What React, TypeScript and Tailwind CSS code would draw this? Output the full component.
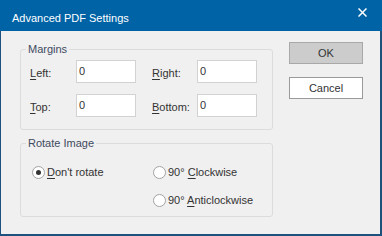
import React from "react";

const U = ({ children }: { children: React.ReactNode }) => (
  <span className="underline underline-offset-[2px] decoration-1">{children}</span>
);

function Radio({ checked, children }: { checked?: boolean; children: React.ReactNode }) {
  return (
    <div className="flex items-center h-[16px]">
      <div className="w-[13px] h-[13px] rounded-full border border-[#a3a3a3] bg-white flex items-center justify-center">
        {checked && <div className="w-[5px] h-[5px] rounded-full bg-[#333333]" />}
      </div>
      <span className="ml-[2px] text-[#333333]">{children}</span>
    </div>
  );
}

function Field() {
  return (
    <div className="w-[60px] h-[23px] border border-[#d2d2d2] bg-white pl-[2px] pt-[2px] leading-[16px] text-[#333333]">0</div>
  );
}

export default function App() {
  return (
    <div className="w-[382px] h-[236px] flex flex-col font-['Liberation_Sans',Arial,sans-serif] text-[11px]">
      <div className="h-[31px] bg-[#0063a6] flex items-start justify-between pl-[12px] pr-[15px] text-white">
        <span className="text-[11px] mt-[12px] leading-[13px]">Advanced PDF Settings</span>
        <svg width="9" height="9" viewBox="0 0 9 9" className="mt-[8px]">
          <path d="M0.5 0.5 L8.5 8.5 M8.5 0.5 L0.5 8.5" stroke="white" strokeWidth="1.5" />
        </svg>
      </div>
      <div className="flex-1 bg-[#f0f0f0] border-l border-r-2 border-b-2 border-[#1c527d] flex pt-[11px] pl-[19px]">
        <div className="w-[253px] flex flex-col">
          <fieldset className="border border-[#dcdcdc] rounded-[3px] pl-[9px] pr-[14px] pt-[4px] pb-[12px] m-0">
            <legend className="-ml-[4px] px-[2px] leading-[14px] text-[#3e4a60]">Margins</legend>
            <div className="flex items-center">
              <span className="w-[46px] text-[#333333] pt-[3px]"><U>L</U>eft:</span>
              <Field />
              <span className="w-[45px] ml-[16px] text-[#333333] pt-[3px]"><U>R</U>ight:</span>
              <Field />
            </div>
            <div className="flex items-center mt-[11px]">
              <span className="w-[46px] text-[#333333] pt-[3px]"><U>T</U>op:</span>
              <Field />
              <span className="w-[45px] ml-[16px] text-[#333333] pt-[3px]"><U>B</U>ottom:</span>
              <Field />
            </div>
          </fieldset>
          <fieldset className="mt-[6px] border border-[#dcdcdc] rounded-[3px] pl-[11px] pt-[14px] pb-[8px] m-0">
            <legend className="-ml-[6px] px-[2px] leading-[14px] text-[#3e4a60]">Rotate Image</legend>
            <div className="grid grid-cols-[121px_1fr] gap-y-[12px]">
              <Radio checked>
                <U>D</U>on't rotate
              </Radio>
              <Radio>
                90° <U>C</U>lockwise
              </Radio>
              <div />
              <Radio>
                90° <U>A</U>nticlockwise
              </Radio>
            </div>
          </fieldset>
        </div>
        <div className="ml-[16px] flex flex-col gap-[13px]">
          <button className="w-[74px] h-[22px] bg-[#cccccc] border border-[#a8a8a8] text-[#333333] text-[11px]">OK</button>
          <button className="w-[74px] h-[22px] bg-white border border-[#9a9a9a] text-[#333333] text-[11px]">Cancel</button>
        </div>
      </div>
    </div>
  );
}
